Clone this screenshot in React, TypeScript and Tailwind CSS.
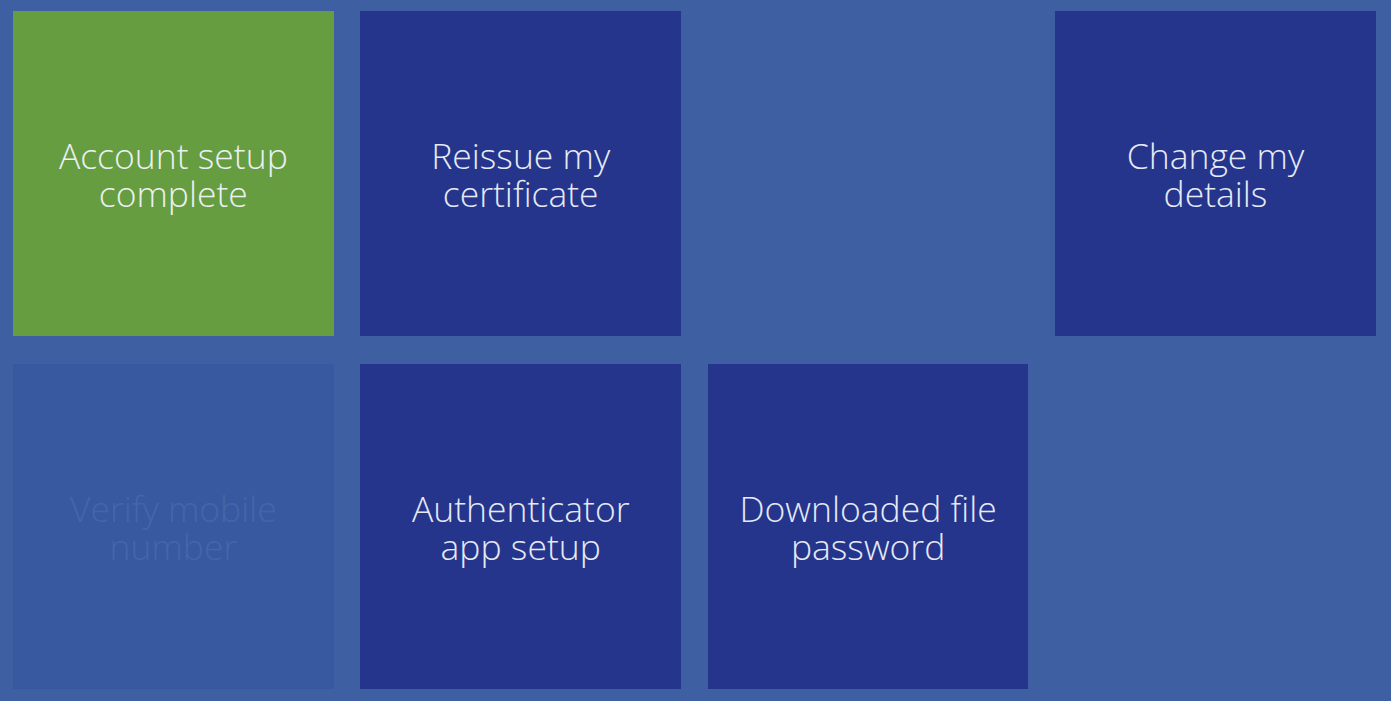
const tiles: { lines: string[]; tone: "green" | "dark" | "muted" | "empty" }[] = [
  { lines: ["Account setup", "complete"], tone: "green" },
  { lines: ["Reissue my", "certificate"], tone: "dark" },
  { lines: [], tone: "empty" },
  { lines: ["Change my", "details"], tone: "dark" },
  { lines: ["Verify mobile", "number"], tone: "muted" },
  { lines: ["Authenticator", "app setup"], tone: "dark" },
  { lines: ["Downloaded file", "password"], tone: "dark" },
  { lines: [], tone: "empty" },
];

const toneClass = {
  green: "bg-[#669d41] text-[#eaf0f2]",
  dark: "bg-[#25358c] text-[#e6eaf4]",
  muted: "bg-[#3859a0] text-[#4466a8]",
  empty: "",
};

export default function App() {
  return (
    <div className="w-[1391px] h-[701px] bg-[#3e60a3] pl-[13px] pt-[11px] font-['Open_Sans',sans-serif]">
      <div className="grid grid-cols-[repeat(4,320.7px)] grid-rows-[repeat(2,325px)] gap-x-[26.7px] gap-y-[28px]">
        {tiles.map((t, i) => (
          <div
            key={i}
            className={`flex items-center justify-center text-center text-[35.5px] font-light leading-[38px] ${toneClass[t.tone]}`}
          >
            {t.lines.length > 0 && (
              <div className="pt-[1px]">
                {t.lines.map((l) => (
                  <div key={l} className="whitespace-nowrap">
                    {l}
                  </div>
                ))}
              </div>
            )}
          </div>
        ))}
      </div>
    </div>
  );
}
